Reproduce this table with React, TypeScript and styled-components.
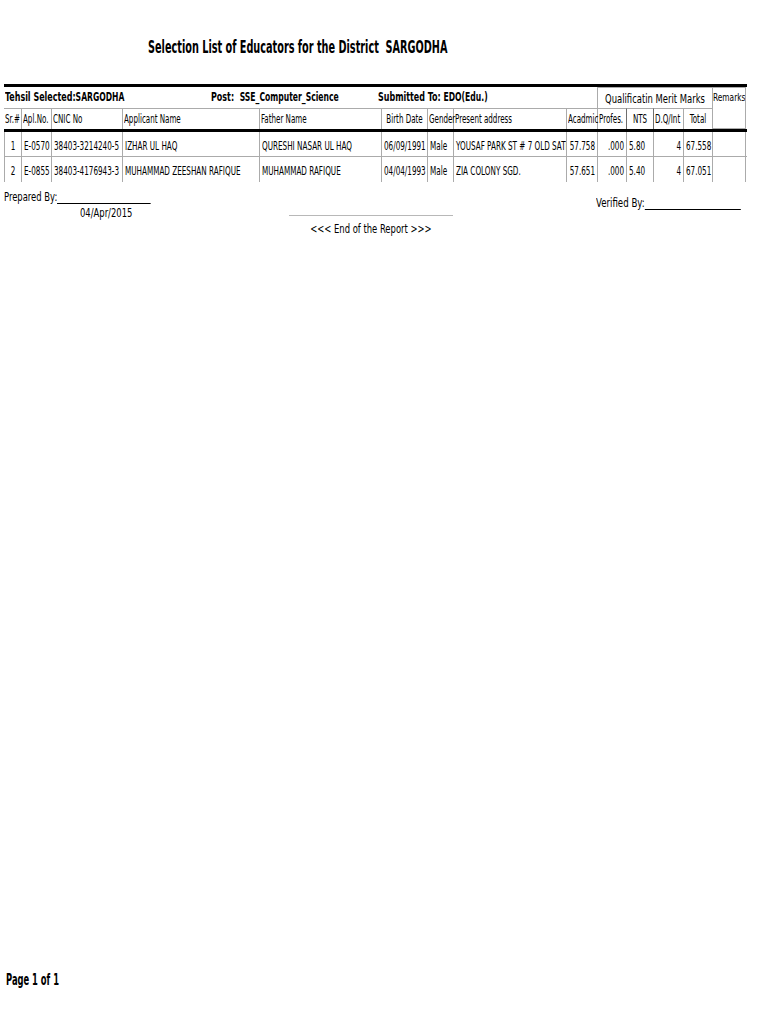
import React from "react";
import styled, { createGlobalStyle } from "styled-components";

const GlobalStyle = createGlobalStyle`
  html, body { margin: 0; padding: 0; background: #fff; }
  body {
    font-family: "DejaVu Sans Condensed", "DejaVu Sans", "Liberation Sans", sans-serif;
    font-stretch: condensed;
    color: #000;
  }
`;

const COLS = "18px 30px 71px 137px 122px 46px 26px 113px 31px 29px 27px 30px 29px 33px";
const LINE = "#ababab";

/* Narrow text run: the reference uses a tall, tightly squeezed face */
const Narrow = styled.span<{ $k: number; $origin?: string }>`
  display: inline-block;
  white-space: nowrap;
  transform: scaleX(${(p) => p.$k});
  transform-origin: ${(p) => p.$origin ?? "left"} center;
`;

/* Cell content block: widened then squeezed so that alignment stays exact */
const CellText = styled.div<{ $k: number; $align?: string }>`
  width: calc(100% / ${(p) => p.$k});
  transform: scaleX(${(p) => p.$k});
  transform-origin: left center;
  text-align: ${(p) => p.$align ?? "left"};
  white-space: nowrap;
`;

const Page = styled.div`
  width: 770px;
  height: 1024px;
  display: flex;
  flex-direction: column;
  box-sizing: border-box;
  padding: 37px 0 0 4px;
`;

const Title = styled.h1`
  margin: 0 0 26px 144px;
  font-size: 17px;
  font-weight: bold;
  line-height: 21px;
`;

const Report = styled.div`
  width: 743px;
`;

const ThickRule = styled.div`
  height: 3px;
  background: #000;
`;

const HeaderGrid = styled.div`
  display: grid;
  grid-template-columns: ${COLS};
  grid-template-rows: 21px 21px;
`;

const InfoText = styled.div<{ $col: string; $pad?: number }>`
  grid-column: ${(p) => p.$col};
  grid-row: 1;
  font-weight: bold;
  font-size: 12px;
  line-height: 21px;
  padding-left: ${(p) => p.$pad ?? 0}px;
  white-space: nowrap;
`;

const InfoValue = styled.span`
  font-size: 11.5px;
`;

const GroupBox = styled.div`
  grid-column: 10 / 14;
  grid-row: 1;
  margin-left: -1px;
  border: 1px solid ${LINE};
  border-bottom: none;
  font-size: 13px;
  line-height: 21px;
  overflow: hidden;
`;

const RemarksBox = styled.div`
  grid-column: 14;
  grid-row: 1 / 3;
  border: 1px solid ${LINE};
  border-left: none;
  font-size: 11px;
  line-height: 20px;
  overflow: hidden;
`;

const HeadCell = styled.div<{ $strong?: boolean }>`
  grid-row: 2;
  border-top: 1px solid ${LINE};
  border-right: 1px solid ${(p) => (p.$strong ? "#6e6e6e" : LINE)};
  font-size: 12px;
  line-height: 20px;
  padding: 0 1px;
  &:first-of-type { border-left: 1px solid ${LINE}; }
`;

const DataRow = styled.div<{ $last?: boolean }>`
  display: grid;
  grid-template-columns: ${COLS};
  height: 25px;
  box-sizing: border-box;
  border-bottom: ${(p) => (p.$last ? "none" : `1px solid ${LINE}`)};
`;

const DataCell = styled.div`
  border-right: 1px solid ${LINE};
  font-size: 12px;
  line-height: 20px;
  padding: 4px 2px 0;
  overflow: hidden;
  &:first-child { border-left: 1px solid ${LINE}; }
`;

const Footer = styled.div`
  display: grid;
  grid-template-columns: 285px 164px 294px;
  margin-top: 8px;
  font-size: 12px;
  line-height: 14px;
`;

const SignBlock = styled.div<{ $pad?: number; $top?: number }>`
  padding-left: ${(p) => p.$pad ?? 0}px;
  padding-top: ${(p) => p.$top ?? 0}px;
`;

const SignLine = styled.span<{ $w: number }>`
  display: inline-block;
  width: ${(p) => p.$w}px;
  height: 12px;
  border-bottom: 1px solid #000;
  vertical-align: -3px;
`;

const DateText = styled.div`
  margin-top: 2px;
  padding-left: 76px;
`;

const EndBlock = styled.div`
  margin-top: 25px;
  border-top: 1px solid #b8b8b8;
  padding-top: 6px;
  text-align: center;
`;

const PageNumber = styled.div`
  margin-top: auto;
  margin-bottom: 35px;
  padding-left: 2px;
  font-size: 15px;
  font-weight: bold;
  line-height: 18px;
`;

type Row = {
  sr: string; apl: string; cnic: string; name: string; father: string;
  dob: string; gender: string; addr: string; acad: string; prof: string;
  nts: string; dq: string; total: string;
};

const rows: Row[] = [
  { sr: "1", apl: "E-0570", cnic: "38403-3214240-5", name: "IZHAR UL HAQ", father: "QURESHI NASAR UL HAQ", dob: "06/09/1991", gender: "Male", addr: "YOUSAF PARK ST # 7 OLD SATELLITE TOWN", acad: "57.758", prof: ".000", nts: "5.80", dq: "4", total: "67.558" },
  { sr: "2", apl: "E-0855", cnic: "38403-4176943-3", name: "MUHAMMAD ZEESHAN RAFIQUE", father: "MUHAMMAD RAFIQUE", dob: "04/04/1993", gender: "Male", addr: "ZIA COLONY SGD.", acad: "57.651", prof: ".000", nts: "5.40", dq: "4", total: "67.051" },
];

const HK = 0.66;
const DK = 0.67;

const headers: { label: string; align?: string; strong?: boolean }[] = [
  { label: "Sr.#" },
  { label: "Apl.No." },
  { label: "CNIC No" },
  { label: "Applicant Name" },
  { label: "Father Name" },
  { label: "Birth Date", align: "center" },
  { label: "Gender" },
  { label: "Present address" },
  { label: "Acadmic", align: "right" },
  { label: "Profes.", strong: true },
  { label: "NTS", align: "center", strong: true },
  { label: "D.Q/Int" },
  { label: "Total", align: "center" },
];

export default function App() {
  return (
    <Page>
      <GlobalStyle />
      <Title>
        <Narrow $k={0.635}>Selection List of Educators for the District&nbsp; SARGODHA</Narrow>
      </Title>
      <Report>
        <ThickRule />
        <HeaderGrid>
          <InfoText $col="1 / 5" $pad={1}>
            <Narrow $k={0.74}>Tehsil Selected:<InfoValue>SARGODHA</InfoValue></Narrow>
          </InfoText>
          <InfoText $col="4 / 6" $pad={88}>
            <Narrow $k={0.74}>Post:&nbsp; <InfoValue>SSE_Computer_Science</InfoValue></Narrow>
          </InfoText>
          <InfoText $col="5 / 9" $pad={118}>
            <Narrow $k={0.74}>Submitted To: <InfoValue>EDO(Edu.)</InfoValue></Narrow>
          </InfoText>
          <GroupBox>
            <CellText $k={0.72} $align="center">Qualificatin Merit Marks</CellText>
          </GroupBox>
          <RemarksBox>
            <CellText $k={0.75}>Remarks</CellText>
          </RemarksBox>
          {headers.map((h) => (
            <HeadCell key={h.label} $strong={h.strong}>
              <CellText $k={HK} $align={h.align}>{h.label}</CellText>
            </HeadCell>
          ))}
        </HeaderGrid>
        <ThickRule />
        {rows.map((r, i) => (
          <DataRow key={r.apl} $last={i === rows.length - 1}>
            <DataCell><CellText $k={DK} $align="center">{r.sr}</CellText></DataCell>
            <DataCell><CellText $k={DK}>{r.apl}</CellText></DataCell>
            <DataCell><CellText $k={DK}>{r.cnic}</CellText></DataCell>
            <DataCell><CellText $k={DK}>{r.name}</CellText></DataCell>
            <DataCell><CellText $k={DK}>{r.father}</CellText></DataCell>
            <DataCell><CellText $k={DK}>{r.dob}</CellText></DataCell>
            <DataCell><CellText $k={DK}>{r.gender}</CellText></DataCell>
            <DataCell><CellText $k={DK}>{r.addr}</CellText></DataCell>
            <DataCell><CellText $k={DK} $align="right">{r.acad}</CellText></DataCell>
            <DataCell><CellText $k={DK} $align="right">{r.prof}</CellText></DataCell>
            <DataCell><CellText $k={DK}>{r.nts}</CellText></DataCell>
            <DataCell><CellText $k={DK} $align="right">{r.dq}</CellText></DataCell>
            <DataCell><CellText $k={DK}>{r.total}</CellText></DataCell>
            <DataCell />
          </DataRow>
        ))}
      </Report>
      <Footer>
        <div>
          <SignBlock>
            <Narrow $k={0.78}>Prepared By:<SignLine $w={120} /></Narrow>
          </SignBlock>
          <DateText><Narrow $k={0.78}>04/Apr/2015</Narrow></DateText>
        </div>
        <EndBlock>
          <Narrow $k={0.78} $origin="center">&lt;&lt;&lt; End of the Report &gt;&gt;&gt;</Narrow>
        </EndBlock>
        <SignBlock $pad={143} $top={6}>
          <Narrow $k={0.8}>Verified By:<SignLine $w={120} /></Narrow>
        </SignBlock>
      </Footer>
      <PageNumber>
        <Narrow $k={0.62}>Page 1 of 1</Narrow>
      </PageNumber>
    </Page>
  );
}
